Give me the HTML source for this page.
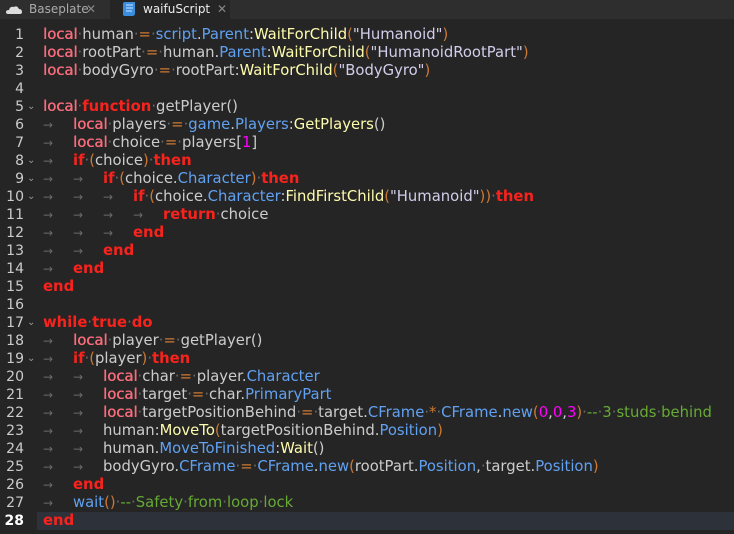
<!DOCTYPE html>
<html><head><meta charset="utf-8"><style>
body{margin:0;width:734px;height:534px;background:#252525;overflow:hidden;font-family:"DejaVu Sans","Liberation Sans",sans-serif;}
#tabs{position:absolute;left:0;top:0;width:734px;height:19px;background:#2e2e2e;}
.tab{position:absolute;top:0;height:19px;font-size:12px;line-height:19px;color:#aaa;}
.ln{position:absolute;left:0;width:24px;text-align:right;font-size:14px;color:#ccc;}
.fold{position:absolute;left:27px;font-size:10px;color:#999;}
.code{position:absolute;left:43px;font-size:14.8px;white-space:pre;color:#ccc;}
.l{color:#f86d7c;text-shadow:0.4px 0 0 #f86d7c}
.k{color:#f8231c;font-weight:bold}
.b{color:#61a1f1}
.y{color:#fdfbac}
.o{color:#cc7832}
.m{color:#ff00ff}
.c{color:#66aa33}
.s{color:#d2cdea}
.d{color:#6a6a6a}
.tb{display:inline-block;width:30px;color:#6a6a6a;font-size:12px;box-sizing:border-box}
.cur{position:absolute;left:37px;top:512px;width:697px;height:18px;background:#2d313a;}
</style></head><body>
<div id="tabs">
 <div class="tab" style="left:0;width:108px;">
  <svg style="position:absolute;left:6px;top:5px" width="16" height="9"><path d="M2 9 Q0 9 0 7 Q0 5 3 5 Q4 1 8 2 Q11 0 13 4 Q16 4 16 7 Q16 9 14 9Z" fill="#ddd"/></svg>
  <span style="position:absolute;left:29px">Baseplate</span><span style="position:absolute;left:86px;color:#888">✕</span></div>
 <div class="tab" style="left:110px;width:120px;background:#252525;color:#eee">
  <svg style="position:absolute;left:13px;top:1px" width="14" height="16"><path d="M2 1 H12 V12 Q12 15 9 15 H2 Q0 15 0 13 V3 Q0 1 2 1Z" fill="#3b8de0"/><path d="M3 4H10M3 7H10M3 10H9" stroke="#cfe6ff" stroke-width="1"/></svg>
  <span style="position:absolute;left:33px">waifuScript</span><span style="position:absolute;left:107px;color:#888">✕</span></div>
</div>
<div class="cur"></div>
<div id="lines"></div>
<script>
const D='<span class="d">·</span>';
const L=[
`<span class="l">local</span>${D}human${D}<span class="o">=</span>${D}<span class="b">script</span>.<span class="b">Parent</span>:<span class="y">WaitForChild</span><span class="o">(</span><span class="s">"Humanoid"</span><span class="o">)</span>`,
`<span class="l">local</span>${D}rootPart${D}<span class="o">=</span>${D}human.<span class="b">Parent</span>:<span class="y">WaitForChild</span><span class="o">(</span><span class="s">"HumanoidRootPart"</span><span class="o">)</span>`,
`<span class="l">local</span>${D}bodyGyro${D}<span class="o">=</span>${D}rootPart:<span class="y">WaitForChild</span><span class="o">(</span><span class="s">"BodyGyro"</span><span class="o">)</span>`,
``,
`<span class="l">local</span>${D}<span class="k">function</span>${D}getPlayer()`,
`<span class="l">local</span>${D}players${D}<span class="o">=</span>${D}<span class="b">game</span>.<span class="b">Players</span>:<span class="y">GetPlayers</span>()`,
`<span class="l">local</span>${D}choice${D}<span class="o">=</span>${D}players[<span class="m">1</span>]`,
`<span class="k">if</span>${D}<span class="o">(</span>choice<span class="o">)</span>${D}<span class="k">then</span>`,
`<span class="k">if</span>${D}<span class="o">(</span>choice.<span class="b">Character</span><span class="o">)</span>${D}<span class="k">then</span>`,
`<span class="k">if</span>${D}<span class="o">(</span>choice.<span class="b">Character</span>:<span class="y">FindFirstChild</span><span class="o">(</span><span class="s">"Humanoid"</span><span class="o">))</span>${D}<span class="k">then</span>`,
`<span class="k">return</span>${D}choice`,
`<span class="k">end</span>`,`<span class="k">end</span>`,`<span class="k">end</span>`,`<span class="k">end</span>`,``,
`<span class="k">while</span>${D}<span class="k">true</span>${D}<span class="k">do</span>`,
`<span class="l">local</span>${D}player${D}<span class="o">=</span>${D}getPlayer()`,
`<span class="k">if</span>${D}<span class="o">(</span>player<span class="o">)</span>${D}<span class="k">then</span>`,
`<span class="l">local</span>${D}char${D}<span class="o">=</span>${D}player.<span class="b">Character</span>`,
`<span class="l">local</span>${D}target${D}<span class="o">=</span>${D}char.<span class="b">PrimaryPart</span>`,
`<span class="l">local</span>${D}targetPositionBehind${D}<span class="o">=</span>${D}target.<span class="b">CFrame</span>${D}<span class="o">*</span>${D}<span class="b">CFrame</span>.<span class="b">new</span><span class="o">(</span><span class="m">0</span>,<span class="m">0</span>,<span class="m">3</span><span class="o">)</span>${D}<span class="c">--${D}3${D}studs${D}behind</span>`,
`human:<span class="y">MoveTo</span><span class="o">(</span>targetPositionBehind.<span class="b">Position</span><span class="o">)</span>`,
`human.<span class="b">MoveToFinished</span>:<span class="y">Wait</span>()`,
`bodyGyro.<span class="b">CFrame</span>${D}<span class="o">=</span>${D}<span class="b">CFrame</span>.<span class="b">new</span><span class="o">(</span>rootPart.<span class="b">Position</span>,${D}target.<span class="b">Position</span><span class="o">)</span>`,
`<span class="k">end</span>`,
`<span class="b">wait</span><span class="o">()</span>${D}<span class="c">--${D}Safety${D}from${D}loop${D}lock</span>`,
`<span class="k">end</span>`];
const ind=[0,0,0,0,0,1,1,1,2,3,4,3,2,1,0,0,0,1,1,2,2,2,2,2,2,1,1,0];
const folds=[5,8,9,10,17,19];
let h='';
L.forEach((s,i)=>{const y=26+i*18;
 h+=`<div class="ln" style="top:${y}px;line-height:18px;${i==27?'font-weight:bold;color:#fff':''}">${i+1}</div>`;
 if(folds.includes(i+1))h+=`<div class="fold" style="top:${y}px;line-height:18px">⌄</div>`;
 let pre='';for(let j=0;j<ind[i];j++)pre+='<span class="tb">→</span>';
 h+=`<div class="code" style="top:${y}px;line-height:18px">${pre}${s}</div>`;});
document.getElementById('lines').innerHTML=h;
</script>
</body></html>
